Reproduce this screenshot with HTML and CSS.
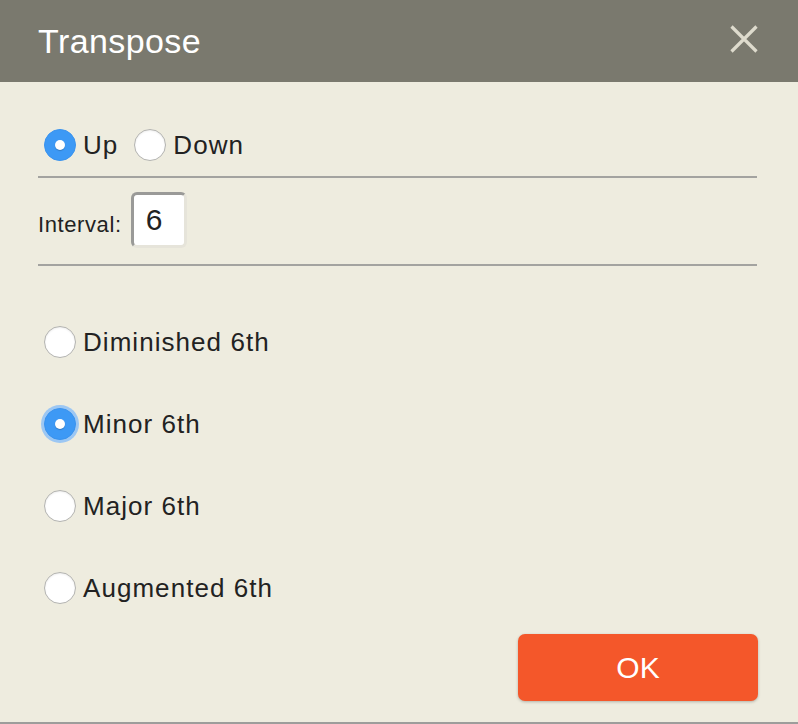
FILE: index.html
```html
<!DOCTYPE html>
<html lang="en">
<head>
<meta charset="utf-8">
<title>Transpose</title>
<link rel="stylesheet" href="styles.css">
</head>
<body>
<div class="dialog">
  <header class="titlebar">
    <h1 class="title">Transpose</h1>
    <button class="close" aria-label="Close">
      <svg width="28" height="28" viewBox="0 0 28 28"><path d="M1.5 1.5 L26.5 26.5 M26.5 1.5 L1.5 26.5" stroke="#dedbcd" stroke-width="3.2" fill="none"/></svg>
    </button>
  </header>
  <main class="content">
    <section class="direction">
      <label class="radio"><input type="radio" name="dir" checked><span>Up</span></label>
      <label class="radio"><input type="radio" name="dir"><span>Down</span></label>
    </section>
    <section class="interval">
      <label class="interval-label" for="iv">Interval:</label>
      <input id="iv" class="interval-input" type="text" value="6">
    </section>
    <section class="options">
      <label class="radio option"><input type="radio" name="q"><span>Diminished 6th</span></label>
      <label class="radio option"><input type="radio" name="q" class="focused" checked><span>Minor 6th</span></label>
      <label class="radio option"><input type="radio" name="q"><span>Major 6th</span></label>
      <label class="radio option"><input type="radio" name="q"><span>Augmented 6th</span></label>
    </section>
    <div class="actions">
      <button class="ok">OK</button>
    </div>
  </main>
</div>
</body>
</html>
```

FILE: styles.css
```css
html, body {
  margin: 0;
  padding: 0;
}
body {
  background: #eeecdf;
  font-family: "Liberation Sans", Arial, sans-serif;
  color: #222;
  width: 798px;
  height: 724px;
  overflow: hidden;
}
.dialog {
  height: 722px;
  border-bottom: 2px solid #9d9d9b;
  display: flex;
  flex-direction: column;
}
.titlebar {
  height: 82px;
  background: #7a796e;
  display: flex;
  align-items: center;
  justify-content: space-between;
  padding: 0 40px 0 38px;
  box-sizing: border-box;
}
.title {
  margin: 0;
  font-size: 34px;
  font-weight: 300;
  color: #ffffff;
  letter-spacing: 0.4px;
  padding-top: 1px;
}
.close {
  background: none;
  border: 0;
  padding: 0;
  width: 28px;
  height: 28px;
  display: block;
  margin-top: -4px;
}
.close svg { display: block; }

.content {
  padding: 0 41px 0 38px;
}
.direction {
  display: flex;
  align-items: center;
  gap: 16px;
  padding: 47px 0 15px 6px;
  border-bottom: 2px solid #a3a3a0;
}
.radio {
  display: flex;
  align-items: center;
  gap: 7px;
  font-size: 26px;
  letter-spacing: 1.05px;
  color: #222;
}
.radio input {
  -webkit-appearance: none;
  appearance: none;
  margin: 0;
  width: 32px;
  height: 32px;
  border-radius: 50%;
  background: #fff;
  border: 1px solid #b3b3b0;
  box-shadow: inset 0 1px 2px rgba(0,0,0,0.08);
  box-sizing: border-box;
  position: relative;
  flex: none;
}
.radio input:checked {
  background: #3d99f5;
  border-color: #3a93ee;
  box-shadow: none;
}
.radio input:checked::after {
  content: "";
  position: absolute;
  left: 10px;
  top: 10px;
  width: 10px;
  height: 10px;
  border-radius: 50%;
  background: #fff;
  box-shadow: 0 1px 1px rgba(0,0,0,0.2);
}
.radio input.focused {
  box-shadow: 0 0 0 3px #9cc7f3;
}
.interval {
  display: flex;
  align-items: center;
  gap: 9px;
  padding: 14px 0 16px 0;
  border-bottom: 2px solid #a3a3a0;
}
.interval-label {
  font-size: 22px;
  letter-spacing: 0.6px;
  color: #222;
  padding-top: 10px;
}
.interval-input {
  width: 56px;
  height: 56px;
  box-sizing: border-box;
  border-style: solid;
  border-width: 3px;
  border-color: #9a9a98 #e6e4da #e6e4da #9a9a98;
  border-radius: 6px;
  background: #fff;
  font-family: "Liberation Sans", Arial, sans-serif;
  font-size: 30px;
  color: #222;
  padding: 0 0 0 12px;
  outline: none;
}
.options {
  display: flex;
  flex-direction: column;
  gap: 50px;
  padding: 60px 0 0 6px;
}
.actions {
  display: flex;
  justify-content: flex-end;
  margin-top: 30px;
  margin-right: -1px;
}
.ok {
  width: 240px;
  height: 67px;
  border: 0;
  border-radius: 7px;
  background: #f4572a;
  color: #fff;
  font-family: "Liberation Sans", Arial, sans-serif;
  font-size: 30px;
  font-weight: 300;
  box-shadow: 0 1px 3px rgba(0,0,0,0.25);
}
```
